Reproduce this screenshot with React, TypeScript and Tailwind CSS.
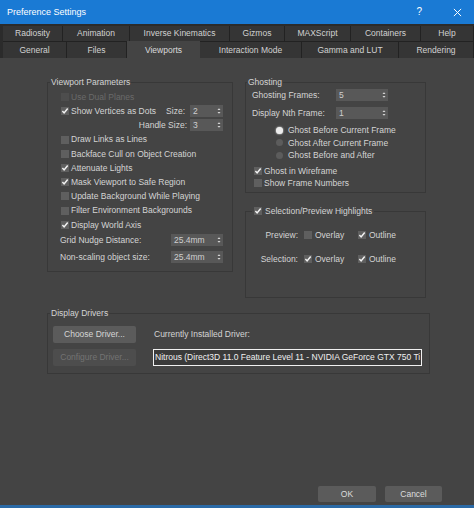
import React from "react";

const Check = ({ checked = false, disabled = false }: { checked?: boolean; disabled?: boolean }) => (
  <span
    className={`w-[8px] h-[8px] shrink-0 flex items-center justify-center ${
      disabled ? "bg-[#4d4d4d]" : "bg-[#5f5f5f]"
    }`}
  >
    {checked && (
      <svg viewBox="0 0 8 8" className="w-[8px] h-[8px]">
        <path d="M1.4 4.1 L3.1 5.9 L6.7 1.6" stroke="#f2f2f2" strokeWidth="1.5" fill="none" />
      </svg>
    )}
  </span>
);

const Radio = ({ on = false }: { on?: boolean }) => (
  <span
    className={`w-[7px] h-[7px] rounded-full shrink-0 ${
      on ? "bg-[#ececec] shadow-[0_0_2px_#ffffff]" : "bg-[#5c5c5c]"
    }`}
  />
);

const Arrows = () => (
  <svg viewBox="0 0 4 8" className="w-[4px] h-[8px]">
    <path d="M0.5 3 L2 1.3 L3.5 3 Z M0.5 5 L2 6.7 L3.5 5 Z" fill="#d8d8d8" />
  </svg>
);

const Spinner = ({ value, wide = false }: { value: string; wide?: boolean }) => (
  <div
    className={`h-[12px] bg-[#585858] flex items-center justify-between pl-[3px] pr-[2px] text-[#cfcfcf] ${
      wide ? "w-[52px]" : "w-[33px]"
    }`}
  >
    <span className="leading-[12px]">{value}</span>
    <Arrows />
  </div>
);

const CheckRow = ({
  label,
  checked = false,
  disabled = false,
}: {
  label: string;
  checked?: boolean;
  disabled?: boolean;
}) => (
  <div className="h-[14.2px] flex items-center gap-[2px]">
    <Check checked={checked} disabled={disabled} />
    <span className={disabled ? "text-[#6a6a6a]" : ""}>{label}</span>
  </div>
);

const Button = ({ label, disabled = false, w }: { label: string; disabled?: boolean; w: string }) => (
  <div
    className={`${w} h-[17px] rounded-[2px] flex items-center justify-center ${
      disabled ? "bg-[#4d4d4d] text-[#737373]" : "bg-[#5b5b5b] text-[#d6d6d6]"
    }`}
  >
    {label}
  </div>
);

const row1 = [
  { t: "Radiosity", w: "w-[60px]" },
  { t: "Animation", w: "w-[67px]" },
  { t: "Inverse Kinematics", w: "w-[100px]" },
  { t: "Gizmos", w: "w-[55px]" },
  { t: "MAXScript", w: "w-[66px]" },
  { t: "Containers", w: "w-[70px]" },
  { t: "Help", w: "w-[53px]" },
];

const row2 = [
  { t: "General", w: "w-[64px]" },
  { t: "Files", w: "w-[60px]" },
  { t: "Viewports", w: "w-[73px]", active: true },
  { t: "Interaction Mode", w: "w-[102px]" },
  { t: "Gamma and LUT", w: "w-[97px]" },
  { t: "Rendering", w: "w-[75px]" },
];

export default function App() {
  return (
    <div
      className="w-[474px] h-[508px] bg-[#444444] flex flex-col overflow-hidden text-[8.5px] text-[#d4d4d4] leading-none"
      style={{ fontFamily: '"Liberation Sans", Arial, sans-serif' }}
    >
      {/* title bar */}
      <div className="h-[24px] bg-[#1a7ad4] flex items-center text-white text-[9px] pl-[7px]">
        <span>Preference Settings</span>
        <span className="ml-auto mr-[31px] text-[10px]">?</span>
        <svg viewBox="0 0 10 10" className="w-[9px] h-[9px] mr-[12px]">
          <path d="M1 1 L9 9 M9 1 L1 9" stroke="#ffffff" strokeWidth="1.1" />
        </svg>
      </div>

      {/* tabs */}
      <div className="bg-[#2b2b2b] pt-[2px] pl-[3px]">
        <div className="flex h-[16px]">
          {row1.map((t) => (
            <div
              key={t.t}
              className={`${t.w} h-[16px] bg-[#353535] border-r border-b border-[#222222] flex items-center justify-center text-[#d2d2d2]`}
            >
              {t.t}
            </div>
          ))}
        </div>
        <div className="flex h-[16px] items-start">
          {row2.map((t) =>
            t.active ? (
              <div
                key={t.t}
                className={`${t.w} h-[19px] -mt-[1px] relative z-10 bg-[#444444] flex items-center justify-center text-[#dadada]`}
              >
                {t.t}
              </div>
            ) : (
              <div
                key={t.t}
                className={`${t.w} h-[16px] bg-[#353535] border-r border-[#222222] flex items-center justify-center text-[#d2d2d2]`}
              >
                {t.t}
              </div>
            )
          )}
        </div>
      </div>

      {/* content */}
      <div className="pl-[47px] pt-[18px]">
        <div className="flex items-start gap-[12px]">
          {/* Viewport Parameters */}
          <fieldset className="w-[186px] border border-[#383838] px-[2px] pb-[5px]">
            <legend className="px-[1px] leading-[12px]">Viewport Parameters</legend>
            <div className="pl-[11px] pr-[7px] pt-[2px]">
              <CheckRow label="Use Dual Planes" disabled />
              <div className="h-[14.2px] flex items-center gap-[2px]">
                <Check checked />
                <span>Show Vertices as Dots</span>
                <span className="ml-auto mr-[3px]">Size:</span>
                <Spinner value="2" />
              </div>
              <div className="h-[14.2px] flex items-center justify-end">
                <span className="mr-[3px]">Handle Size:</span>
                <Spinner value="3" />
              </div>
              <CheckRow label="Draw Links as Lines" />
              <CheckRow label="Backface Cull on Object Creation" />
              <CheckRow label="Attenuate Lights" checked />
              <CheckRow label="Mask Viewport to Safe Region" checked />
              <CheckRow label="Update Background While Playing" />
              <CheckRow label="Filter Environment Backgrounds" />
              <CheckRow label="Display World Axis" checked />
              <div className="h-[17px] flex items-center -ml-[1px]">
                <span>Grid Nudge Distance:</span>
                <span className="ml-auto">
                  <Spinner value="25.4mm" wide />
                </span>
              </div>
              <div className="h-[17px] flex items-center -ml-[1px]">
                <span>Non-scaling object size:</span>
                <span className="ml-auto">
                  <Spinner value="25.4mm" wide />
                </span>
              </div>
            </div>
          </fieldset>

          {/* right column */}
          <div className="flex flex-col">
            <fieldset className="w-[181px] border border-[#383838] px-[1px] pb-[3px]">
              <legend className="px-[1px] leading-[12px]">Ghosting</legend>
              <div className="pl-[5px] pt-[1px]">
                <div className="h-[12px] flex items-center">
                  <span className="w-[84px]">Ghosting Frames:</span>
                  <Spinner value="5" wide />
                </div>
                <div className="h-[12px] flex items-center mt-[6px]">
                  <span className="w-[84px]">Display Nth Frame:</span>
                  <Spinner value="1" wide />
                </div>
                <div className="mt-[5px] pl-[24px]">
                  <div className="h-[12.5px] flex items-center gap-[5px]">
                    <Radio on />
                    <span>Ghost Before Current Frame</span>
                  </div>
                  <div className="h-[12.5px] flex items-center gap-[5px]">
                    <Radio />
                    <span>Ghost After Current Frame</span>
                  </div>
                  <div className="h-[12.5px] flex items-center gap-[5px]">
                    <Radio />
                    <span>Ghost Before and After</span>
                  </div>
                </div>
                <div className="mt-[3.5px] pl-[2px]">
                  <div className="h-[12px] flex items-center gap-[2px]">
                    <Check checked />
                    <span>Ghost in Wireframe</span>
                  </div>
                  <div className="h-[12px] flex items-center gap-[2px]">
                    <Check />
                    <span>Show Frame Numbers</span>
                  </div>
                </div>
              </div>
            </fieldset>

            <fieldset className="w-[181px] mt-[12px] border border-[#383838] px-[1px] pb-[32px]">
              <legend className="ml-[5px] px-[2px] leading-[12px]">
                <span className="inline-flex items-center gap-[3px] h-[12px]">
                  <Check checked />
                  <span>Selection/Preview Highlights</span>
                </span>
              </legend>
              <div className="h-[12px] mt-[11px] flex items-center">
                <span className="w-[51px] text-right">Preview:</span>
                <span className="ml-[6px] w-[54px] flex items-center gap-[3px]">
                  <Check />
                  <span>Overlay</span>
                </span>
                <span className="flex items-center gap-[3px]">
                  <Check checked />
                  <span>Outline</span>
                </span>
              </div>
              <div className="h-[12px] mt-[12px] flex items-center">
                <span className="w-[51px] text-right">Selection:</span>
                <span className="ml-[6px] w-[54px] flex items-center gap-[3px]">
                  <Check checked />
                  <span>Overlay</span>
                </span>
                <span className="flex items-center gap-[3px]">
                  <Check checked />
                  <span>Outline</span>
                </span>
              </div>
            </fieldset>
          </div>
        </div>

        {/* Display Drivers */}
        <fieldset className="w-[383px] mt-[9px] border border-[#383838] px-[2px] pb-[7px]">
          <legend className="px-[1px] leading-[12px]">Display Drivers</legend>
          <div className="pl-[3px] pt-[7px] flex flex-col gap-[6px]">
            <div className="flex items-center">
              <Button label="Choose Driver..." w="w-[83px]" />
              <span className="ml-[18px]">Currently Installed Driver:</span>
            </div>
            <div className="flex items-center">
              <Button label="Configure Driver..." w="w-[83px]" disabled />
              <div className="ml-[17px] w-[269px] h-[17px] border border-[#f0f0f0] bg-[#3a3a3a] flex items-center pl-[1px] text-[#f0f0f0] whitespace-nowrap overflow-hidden">
                Nitrous (Direct3D 11.0 Feature Level 11 - NVIDIA GeForce GTX 750 Ti
              </div>
            </div>
          </div>
        </fieldset>
      </div>

      {/* footer */}
      <div className="mt-auto flex justify-end gap-[9px] pr-[32px] pb-[3px]">
        <div className="w-[58px] h-[16px] rounded-[2px] bg-[#5b5b5b] flex items-center justify-center text-[#dcdcdc]">
          OK
        </div>
        <div className="w-[57px] h-[16px] rounded-[2px] bg-[#5b5b5b] flex items-center justify-center text-[#dcdcdc]">
          Cancel
        </div>
      </div>
      <div className="h-[3px] bg-[#2b6aa6]" />
    </div>
  );
}
